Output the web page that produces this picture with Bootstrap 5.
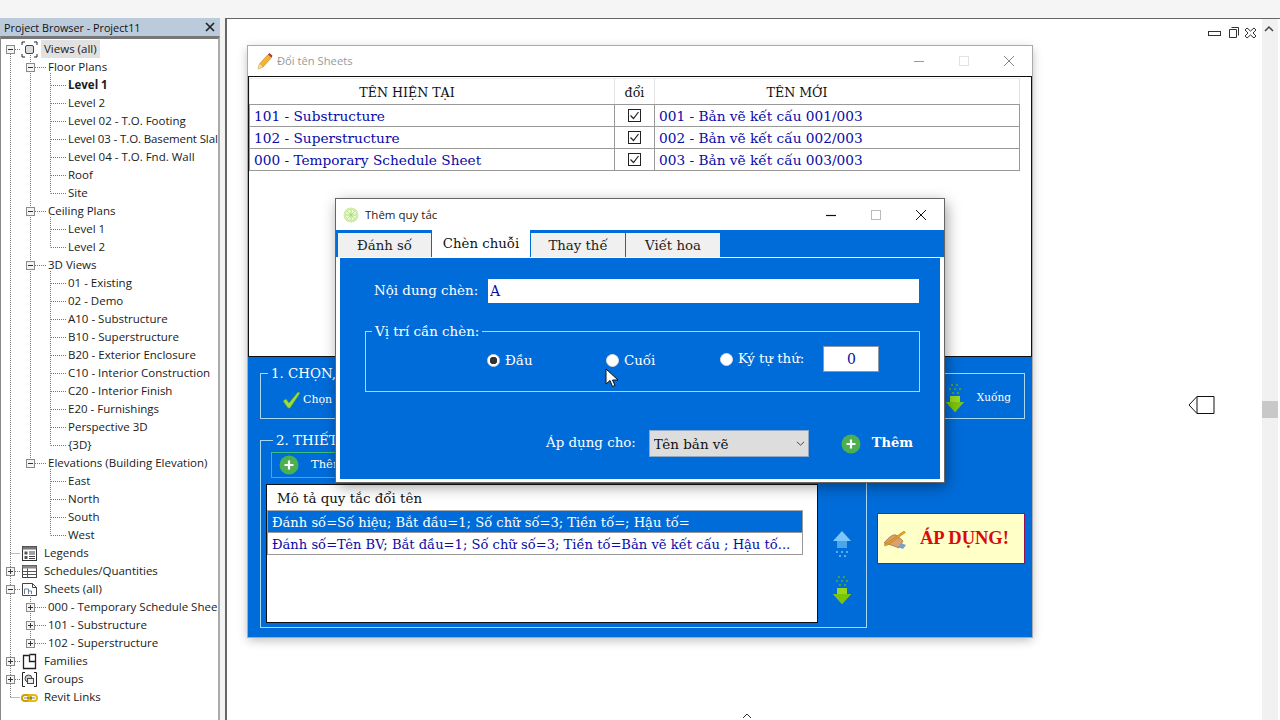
<!DOCTYPE html>
<html lang="vi">
<head>
<meta charset="utf-8">
<title>Project Browser</title>
<link href="https://cdn.jsdelivr.net/npm/bootstrap@5.3.0/dist/css/bootstrap.min.css" rel="stylesheet">
<style>
:root{--blue:#006cd9;--navy:#0a0aa8;--edge:#a9d8f5}
html,body{height:100%;overflow:hidden;background:#fff}
body{font-family:"Open Sans","Noto Sans",sans-serif;font-size:11.5px;color:#111}
.top-strip{height:18px;background:#f5f5f5}
.shell{height:702px}
.browser{width:220px;flex:none;position:relative;background:#fff;border-left:1px solid #888}
.browser-title{height:18px;margin-left:-1px;padding:0 5px 0 4px;background:#bccbdc;font-size:10.8px;line-height:19px}
.browser-tree{border-top:3px solid #777;border-right:2px solid #aaa;height:684px;padding-top:1px;overflow:hidden}
.tree-lines{position:absolute;left:-1px;top:-18px;pointer-events:none}
.node{height:18px;line-height:17px;white-space:nowrap;overflow:hidden;position:relative;color:#1a1a1a}
.lv0{padding-left:20px}.lv1{padding-left:47px}.lv2{padding-left:67px}
.lv0 span{margin-bottom:1px}
.lv0 span.sel-label{margin-bottom:0}
.tight-text{letter-spacing:-.12px}
.node svg{flex:none;margin-right:6px}
.sel-label{background:#e1e1e1;padding:0 3px;margin-left:-3px;line-height:18px}
.gutter{width:5px;flex:none;background:#f3f3f3}
.canvas-area{flex:1;position:relative;background:#fff;border-left:2px solid #666;border-top:1px solid #666}
.win-main{position:absolute;left:21px;top:27px;width:784px;height:591px;background:#fff;box-shadow:0 0 0 1px #aaa,0 3px 10px rgba(0,0,0,.28)}
.win-bar{height:30px;padding:0 16px 0 9px;color:#999}
.win-bar svg{flex:none}
.win-title{font-size:11.2px;margin-left:4px}
.sans-label{font-family:"Open Sans","Noto Sans",sans-serif;font-size:11.5px;margin-left:6px}
.win-ctrl{margin-left:auto;gap:31px}
.sheet-area{height:281px;border:1px solid #111;padding:1px 11px 0 0}
.serif{font-family:"DejaVu Serif","Liberation Serif",serif}
.tbl-names{width:770px;margin:0;table-layout:fixed;font-size:13.7px;--bs-table-bg:transparent}
.tbl-names th,.tbl-names td{border:1px solid #999;height:22px;line-height:20px;white-space:nowrap}
.tbl-names th{font-weight:400;text-align:center;height:26px;padding:0 0 1px;border-color:#eee #e3e3e3 #999;color:#111;font-size:12.6px}
.tbl-names th.head-left{padding-right:50px}
.tbl-names th.head-right{padding-right:80px}
.tbl-names td{color:var(--navy);padding:1px 0 0 4px}
.tbl-names td.mid{text-align:center;padding:0}
.tbl-names td.mid svg{margin-bottom:3px}
.tbl-names th:first-child{border-left-color:#eee}
.lower{height:280px;background:var(--blue);padding:7px 7px 0 12px;color:#fff}
.frame{border:1px solid var(--edge);margin:0;padding:0;min-width:0}
.frame>legend{float:none;width:auto;font-size:13.4px;line-height:16px;margin:0 0 0 7px;padding:2px 3px 0;color:#fff}
.frame-one{height:55px}
.frame-one .body-row{height:37px;padding-left:21px}
.tiny{font-size:11px;margin-left:2px}
.down-box{margin-left:auto;padding-right:13px;margin-top:-6px}
.down-box .tiny{font-size:10.5px}
.frame-two{width:607px;height:197px;padding:0 5px}
.frame-wrap{gap:10px;margin-top:12px}
.add-btn{width:300px;height:26px;margin-left:5px;padding-left:7px;border:1px solid #3fc07a;margin-top:3px}
.add-btn span{margin-left:12px;font-size:11.5px}
.rule-wrap{flex:none;width:552px}
.rule-box{width:552px;height:139px;margin-top:6px;background:#fff;border:1px solid #111;color:#111}
.rule-head{width:536px;height:26px;line-height:27px;padding-left:10px;font-size:13.4px;border-bottom:1px solid #aaa}
.rule-row{width:536px;height:22px;line-height:23px;font-size:13.1px;color:var(--navy);border:1px solid #999;border-top:0;white-space:nowrap;overflow:hidden;padding-left:4px}
.rule-on{background:var(--blue);color:#fff}
.arrow-col{flex:none;width:47px;gap:15px;padding-top:81px}
.apply-col{padding-top:82px}
.apply-btn{width:148px;height:51px;background:#ffffc8;border:1px solid #8c1450;color:#d90a0a;font-family:"Liberation Serif",serif;font-weight:700;font-size:18.5px;padding-left:5px;gap:11px}
.win-dialog{position:absolute;left:109px;top:180px;width:608px;height:283px;background:#fff;box-shadow:0 0 0 1px #666,2px 4px 14px rgba(0,0,0,.42);z-index:2}
.dlg-bar{height:31px;padding:0 16px 0 7px;color:#222}
.dlg-ctrl{margin-left:auto;gap:31px}
.dlg-tabs{height:27px;background:var(--blue);padding-left:2px;border:0;gap:1px;flex-wrap:nowrap}
.dlg-tabs .nav-link{height:24px;margin:3px 0 0;padding:0;border:0;border-radius:0;background:#f0f0f0;color:#222;font-size:13.3px;line-height:25px;text-align:center}
.dlg-tabs .nav-link.active{height:27px;margin-top:0;background:#fff;color:#111;line-height:27px}
.tab-a{width:93px}.tab-b{width:98px}.tab-c{width:94px}.tab-d{width:94px}
.dlg-panel{height:221px;margin:1px 4px 0;background:var(--blue);color:#fff;padding:21px 21px 0 25px;font-size:13.4px}
.in-row{padding-left:9px}
.in-row label{width:105px;margin-right:9px;white-space:nowrap}
.in-text{flex:1;height:24px;border:0;border-radius:0;padding:0 0 0 2px;font-size:14px;font-family:inherit;color:var(--navy);min-height:0;width:auto}
.frame-pos{height:70px;margin-top:19px;margin-right:-1px}
.frame-pos>legend{margin-left:6px}
.frame-pos .radios{padding:6px 0 0 121px}
.rad{width:13px;height:13px;border-radius:50%;background:#fff;flex:none;border:1px solid #ddd}
.rad-on{background:radial-gradient(circle,#333 0 3.5px,#fff 4px)}
.rad-txt{margin-left:5px}
.rad-one{width:119px;margin-top:4px}.rad-two{width:114px;margin-top:4px}
.num-in{width:56px;height:26px;margin-left:19px;border:1px solid #8a97a8;border-radius:0;padding:0;text-align:center;font:400 14px "DejaVu Serif",serif;color:var(--navy);min-height:0}
.apply-row{margin-top:38px;padding-left:181px}
.sel-apply{width:160px;height:27px;margin-left:13px;padding:0 0 0 4px;border:1px solid #8fa8c4;border-radius:0;background-color:#ddd;font:13.5px "DejaVu Serif",serif;color:#111;background-image:url("data:image/svg+xml,%3csvg xmlns='http://www.w3.org/2000/svg' viewBox='0 0 10 6'%3e%3cpath d='M1 1l4 4 4-4' fill='none' stroke='%23333'/%3e%3c/svg%3e");background-position:right 3px center;background-size:9px}
.them{font-weight:700;font-size:13px;margin-left:11px;margin-bottom:2px}
.apply-row svg{margin-left:32px}
.mdi-ctrl{position:absolute;left:981px;top:8px}
.vscroll{position:absolute;right:2px;top:0;width:16px;height:100%;background:#f1f1f1}
.vthumb{position:absolute;left:0;top:382px;width:16px;height:17px;background:#c8c8c8}
.vup{position:absolute;left:2px;top:6px}
.tag-mark{position:absolute;left:961px;top:377px}
.caret-mark{position:absolute;left:515px;top:694px}
.mouse{position:absolute;left:378px;top:349px;z-index:5}
</style>
</head>
<body>
<div class="top-strip"></div>
<div class="shell d-flex">
  <div class="browser">
    <div class="browser-title d-flex justify-content-between align-items-center">
      <span>Project Browser - Project11</span>
      <svg width="10" height="10" viewBox="0 0 10 10"><path d="M1 1l8 8M9 1l-8 8" stroke="#222" stroke-width="1.7"/></svg>
    </div>
    <div class="browser-tree">
      <div class="node lv0 d-flex align-items-center"><svg width="17" height="17" viewBox="0 0 17 17"><path d="M1 4V1h3M13 1h3v3M16 13v3h-3M4 16H1v-3" fill="none" stroke="#222"/><rect x="4.5" y="4.5" width="8" height="8" rx="1.5" fill="#ddd" stroke="#444"/></svg><span class="sel-label">Views (all)</span></div>
      <div class="node lv1">Floor Plans</div>
      <div class="node lv2 fw-bold">Level 1</div>
      <div class="node lv2">Level 2</div>
      <div class="node lv2">Level 02 - T.O. Footing</div>
      <div class="node lv2 tight-text">Level 03 - T.O. Basement Slal</div>
      <div class="node lv2">Level 04 - T.O. Fnd. Wall</div>
      <div class="node lv2">Roof</div>
      <div class="node lv2">Site</div>
      <div class="node lv1">Ceiling Plans</div>
      <div class="node lv2">Level 1</div>
      <div class="node lv2">Level 2</div>
      <div class="node lv1">3D Views</div>
      <div class="node lv2">01 - Existing</div>
      <div class="node lv2">02 - Demo</div>
      <div class="node lv2">A10 - Substructure</div>
      <div class="node lv2">B10 - Superstructure</div>
      <div class="node lv2">B20 - Exterior Enclosure</div>
      <div class="node lv2">C10 - Interior Construction</div>
      <div class="node lv2">C20 - Interior Finish</div>
      <div class="node lv2">E20 - Furnishings</div>
      <div class="node lv2">Perspective 3D</div>
      <div class="node lv2">{3D}</div>
      <div class="node lv1">Elevations (Building Elevation)</div>
      <div class="node lv2">East</div>
      <div class="node lv2">North</div>
      <div class="node lv2">South</div>
      <div class="node lv2">West</div>
      <div class="node lv0 d-flex align-items-center"><svg width="17" height="17" viewBox="0 0 17 17"><rect x="1.5" y="1.5" width="14" height="14" fill="#fff" stroke="#333"/><rect x="1.5" y="1.5" width="14" height="3" fill="#777"/><rect x="3.5" y="6.5" width="3" height="3" fill="#555"/><rect x="3.5" y="11" width="3" height="3" fill="#555"/><path d="M8 7h6M8 9h6M8 11.500h6M8 13.500h6" stroke="#444"/></svg><span>Legends</span></div>
      <div class="node lv0 d-flex align-items-center"><svg width="17" height="17" viewBox="0 0 17 17"><rect x="1.5" y="2.500" width="14" height="12" fill="#fff" stroke="#444"/><rect x="1.500" y="2.500" width="14" height="3" fill="#888"/><path d="M1.500 8.500h14M1.500 11.500h14M6.500 5.500v9" stroke="#555"/></svg><span>Schedules/Quantities</span></div>
      <div class="node lv0 d-flex align-items-center"><svg width="17" height="17" viewBox="0 0 17 17"><path d="M1.500 2.500h10l4 4v8h-14z" fill="#fff" stroke="#444"/><path d="M11.500 2.500v4h4" fill="none" stroke="#444"/><path d="M3.500 13V8h4v5M7.500 10h3v3" fill="none" stroke="#6a7f99"/></svg><span>Sheets (all)</span></div>
      <div class="node lv1">000 - Temporary Schedule Shee</div>
      <div class="node lv1">101 - Substructure</div>
      <div class="node lv1">102 - Superstructure</div>
      <div class="node lv0 d-flex align-items-center"><svg width="17" height="17" viewBox="0 0 17 17"><path d="M2.500 2.500h6v6h6v7h-12z M8.500 1.500h6v7" fill="#fff" stroke="#222" stroke-width="1.300"/></svg><span>Families</span></div>
      <div class="node lv0 d-flex align-items-center"><svg width="17" height="17" viewBox="0 0 17 17"><path d="M4 1.500H1.500v14H4M13 1.500h2.500v14H13" fill="none" stroke="#222"/><circle cx="7.500" cy="7.500" r="3.500" fill="#ccc" stroke="#444"/><rect x="6.500" y="7.500" width="6" height="5" fill="#eee" stroke="#444"/></svg><span>Groups</span></div>
      <div class="node lv0 d-flex align-items-center"><svg width="17" height="17" viewBox="0 0 17 17"><rect x="1" y="6" width="9" height="6" rx="3" fill="none" stroke="#c9a200" stroke-width="2"/><rect x="7" y="6" width="9" height="6" rx="3" fill="none" stroke="#e3bb10" stroke-width="2"/><path d="M3 9h11" stroke="#444" stroke-width=".7"/></svg><span>Revit Links</span></div>
    </div>
    <svg class="tree-lines" width="220" height="720" viewBox="0 0 220 720">
      <g fill="none" stroke="#777" stroke-dasharray="1 1">
        <path d="M10.500 50V697.500M15 49.500H20M10.500 697.500H20M10.500 553.500H20M15 571.500H20M15 589.500H20M15 661.500H20M15 679.500H20"/>
        <path d="M30.500 55V463.500M35 67.500H46M35 211.500H46M35 265.500H46M35 463.500H46"/>
        <path d="M50.500 73V193.500M50.500 217V247.500M50.500 271V445.500M50.500 469V535.500"/>
        <path d="M51 85.500H66M51 103.500H66M51 121.500H66M51 139.500H66M51 157.500H66M51 175.500H66M51 193.500H66M51 229.500H66M51 247.500H66M51 283.500H66M51 301.500H66M51 319.500H66M51 337.500H66M51 355.500H66M51 373.500H66M51 391.500H66M51 409.500H66M51 427.500H66M51 445.500H66M51 481.500H66M51 499.500H66M51 517.500H66M51 535.500H66"/>
        <path d="M30.500 595V643.500M35 607.500H46M35 625.500H46M35 643.500H46"/>
      </g>
      <g fill="#f4f4f4" stroke="#8a8a8a">
        <rect x="6.500" y="45.500" width="8" height="8"/><rect x="26.500" y="63.500" width="8" height="8"/><rect x="26.500" y="207.500" width="8" height="8"/><rect x="26.500" y="261.500" width="8" height="8"/><rect x="26.500" y="459.500" width="8" height="8"/><rect x="6.500" y="567.500" width="8" height="8"/><rect x="6.500" y="585.500" width="8" height="8"/><rect x="26.500" y="603.500" width="8" height="8"/><rect x="26.500" y="621.500" width="8" height="8"/><rect x="26.500" y="639.500" width="8" height="8"/><rect x="6.500" y="657.500" width="8" height="8"/><rect x="6.500" y="675.500" width="8" height="8"/>
      </g>
      <path stroke="#333" d="M8 49.500h5M28 67.500h5M28 211.500h5M28 265.500h5M28 463.500h5M8 589.500h5M8 571.500h5M10.500 569v5M28 607.500h5M30.500 605v5M28 625.500h5M30.500 623v5M28 643.500h5M30.500 641v5M8 661.500h5M10.500 659v5M8 679.500h5M10.500 677v5"/>
    </svg>
  </div>
  <div class="gutter"></div>
  <div class="canvas-area">
    <div class="win-main">
      <div class="win-bar d-flex align-items-center">
        <svg width="16" height="18" viewBox="0 0 16 18"><path d="M1 17l1.500-5L11 2.500l3.500 3L6 15z" fill="#f5b335" stroke="#c98a1c" stroke-width=".7"/><path d="M11 2.500l1.500-1.500 3 2.700-1 1.800z" fill="#a8323a"/><path d="M1 17l1.500-5 3.500 3z" fill="#f1d9ad"/></svg>
        <span class="win-title">Đổi tên Sheets</span>
        <div class="win-ctrl d-flex align-items-center">
          <svg width="14" height="12" viewBox="0 0 14 12"><path d="M2 6.500h10" stroke="#999"/></svg>
          <svg width="14" height="12" viewBox="0 0 14 12"><rect x="2.500" y="1.500" width="9" height="9" fill="none" stroke="#e2e2e2"/></svg>
          <svg width="14" height="12" viewBox="0 0 14 12"><path d="M2 1l10 10M12 1L2 11" stroke="#888"/></svg>
        </div>
      </div>
      <div class="sheet-area">
        <table class="table tbl-names serif">
          <colgroup><col style="width:365px"><col style="width:40px"><col style="width:365px"></colgroup>
          <thead><tr><th class="head-left">TÊN HIỆN TẠI</th><th>đổi</th><th class="head-right">TÊN MỚI</th></tr></thead>
          <tbody>
            <tr><td>101 - Substructure</td><td class="mid"><svg width="13" height="13" viewBox="0 0 13 13"><rect x=".5" y=".5" width="12" height="12" fill="#fff" stroke="#222"/><path d="M2.500 6.500l3 3 5-6.500" fill="none" stroke="#222" stroke-width="1.200"/></svg></td><td>001 - Bản vẽ kết cấu 001/003</td></tr>
            <tr><td>102 - Superstructure</td><td class="mid"><svg width="13" height="13" viewBox="0 0 13 13"><rect x=".5" y=".5" width="12" height="12" fill="#fff" stroke="#222"/><path d="M2.500 6.500l3 3 5-6.500" fill="none" stroke="#222" stroke-width="1.200"/></svg></td><td>002 - Bản vẽ kết cấu 002/003</td></tr>
            <tr><td>000 - Temporary Schedule Sheet</td><td class="mid"><svg width="13" height="13" viewBox="0 0 13 13"><rect x=".5" y=".5" width="12" height="12" fill="#fff" stroke="#222"/><path d="M2.500 6.500l3 3 5-6.500" fill="none" stroke="#222" stroke-width="1.200"/></svg></td><td>003 - Bản vẽ kết cấu 003/003</td></tr>
          </tbody>
        </table>
      </div>
      <div class="lower serif">
        <fieldset class="frame frame-one">
          <legend>1. CHỌN, SẮP XẾP</legend>
          <div class="body-row d-flex align-items-center">
            <svg width="19" height="19" viewBox="0 0 19 19"><path d="M1 10l3-2 3 4 9-11 2 1-10 15h-2z" fill="#9ae03a" stroke="#5a9e1c" stroke-width=".6"/></svg>
            <span class="tiny">Chọn tất cả</span>
            <div class="down-box d-flex align-items-center">
              <svg width="20" height="30" viewBox="0 0 20 30"><g fill="#3fa33f"><rect x="6" y="1" width="2" height="2"/><rect x="11" y="1" width="2" height="2"/><rect x="4" y="5" width="2" height="2"/><rect x="9" y="5" width="2" height="2"/><rect x="14" y="5" width="2" height="2"/><rect x="7" y="9" width="2" height="2"/><rect x="12" y="9" width="2" height="2"/></g><path d="M5 13h10v6h4L10 29 1 19h4z" fill="#97d81f"/><path d="M1 19h18l-9 10z" fill="#7cc40c"/></svg>
              <span class="tiny ms-2 ps-1">Xuống</span>
            </div>
          </div>
        </fieldset>
        <div class="frame-wrap d-flex">
          <fieldset class="frame frame-two">
            <legend>2. THIẾT LẬP</legend>
            <div class="d-flex">
              <div class="rule-wrap">
                <div class="add-btn d-flex align-items-center">
                  <svg width="20" height="20" viewBox="0 0 20 20"><circle cx="10" cy="10" r="9.500" fill="#4caf50"/><path d="M10 5.500v9M5.500 10h9" stroke="#fff" stroke-width="2.200"/></svg><span>Thêm quy tắc</span>
                </div>
                <div class="rule-box">
                  <div class="rule-head">Mô tả quy tắc đổi tên</div>
                  <div class="rule-row rule-on">Đánh số=Số hiệu; Bắt đầu=1; Số chữ số=3; Tiền tố=; Hậu tố=</div>
                  <div class="rule-row">Đánh số=Tên BV; Bắt đầu=1; Số chữ số=3; Tiền tố=Bản vẽ kết cấu ; Hậu tố...</div>
                </div>
              </div>
              <div class="arrow-col d-flex flex-column align-items-center">
                <svg width="20" height="30" viewBox="0 0 20 30"><path d="M10 1l9 10h-4v7H5v-7H1z" fill="#7ec6f7"/><path d="M5 11h10v7H5z" fill="#4aa6ec"/><g fill="#58aef0"><rect x="4" y="21" width="2" height="2"/><rect x="9" y="21" width="2" height="2"/><rect x="14" y="21" width="2" height="2"/><rect x="7" y="25" width="2" height="2"/><rect x="12" y="25" width="2" height="2"/></g></svg>
                <svg width="20" height="30" viewBox="0 0 20 30"><g fill="#3fa33f"><rect x="6" y="1" width="2" height="2"/><rect x="11" y="1" width="2" height="2"/><rect x="4" y="5" width="2" height="2"/><rect x="9" y="5" width="2" height="2"/><rect x="14" y="5" width="2" height="2"/><rect x="7" y="9" width="2" height="2"/><rect x="12" y="9" width="2" height="2"/></g><path d="M5 13h10v6h4L10 29 1 19h4z" fill="#97d81f"/><path d="M1 19h18l-9 10z" fill="#7cc40c"/></svg>
              </div>
            </div>
          </fieldset>
          <div class="apply-col">
            <div class="apply-btn d-flex align-items-center">
              <svg width="26" height="22" viewBox="0 0 26 22"><path d="M1 15c5-6 9-9 12-8l5 4 2 2-4 7-8-3z" fill="#d9a070" stroke="#8a5a30" stroke-width=".6"/><path d="M18 15l5 2-3 4-5-2z" fill="#7b9fc9"/><path d="M1 17L21 3l1.500 1.500L3 18z" fill="#f0a020" stroke="#9a5a10" stroke-width=".4"/></svg>
              <span>ÁP DỤNG!</span>
            </div>
          </div>
        </div>
      </div>
    </div>

    <div class="win-dialog serif">
      <div class="dlg-bar d-flex align-items-center">
        <svg width="16" height="16" viewBox="0 0 16 16"><circle cx="8" cy="8" r="7.500" fill="#cdeea4"/><circle cx="8" cy="8" r="5" fill="#f1f9e3"/><path d="M8 3v10M3 8h10M4.500 4.500l7 7M11.500 4.500l-7 7" stroke="#a8dd70"/></svg>
        <span class="win-title sans-label">Thêm quy tắc</span>
        <div class="dlg-ctrl d-flex align-items-center">
          <svg width="14" height="12" viewBox="0 0 14 12"><path d="M2 6.500h10" stroke="#111" stroke-width="1.200"/></svg>
          <svg width="14" height="12" viewBox="0 0 14 12"><rect x="2.500" y="1.500" width="9" height="9" fill="none" stroke="#bbb"/></svg>
          <svg width="14" height="12" viewBox="0 0 14 12"><path d="M2 1l10 10M12 1L2 11" stroke="#111"/></svg>
        </div>
      </div>
      <ul class="nav nav-tabs dlg-tabs">
        <li class="nav-item"><a class="nav-link tab-a" href="#">Đánh số</a></li>
        <li class="nav-item"><a class="nav-link active tab-b" href="#">Chèn chuỗi</a></li>
        <li class="nav-item"><a class="nav-link tab-c" href="#">Thay thế</a></li>
        <li class="nav-item"><a class="nav-link tab-d" href="#">Viết hoa</a></li>
      </ul>
      <div class="dlg-panel">
        <div class="in-row d-flex align-items-center">
          <label>Nội dung chèn:</label>
          <input class="form-control in-text" value="A">
        </div>
        <fieldset class="frame frame-pos">
          <legend>Vị trí cần chèn:</legend>
          <div class="radios d-flex align-items-center">
            <div class="rad-one d-flex align-items-center"><span class="rad rad-on"></span><span class="rad-txt">Đầu</span></div>
            <div class="rad-two d-flex align-items-center"><span class="rad"></span><span class="rad-txt">Cuối</span></div>
            <div class="d-flex align-items-center"><span class="rad"></span><span class="rad-txt">Ký tự thứ:</span><input class="form-control num-in" value="0"></div>
          </div>
        </fieldset>
        <div class="apply-row d-flex align-items-center">
          <span>Áp dụng cho:</span>
          <select class="form-select sel-apply"><option>Tên bản vẽ</option></select>
          <svg width="20" height="20" viewBox="0 0 20 20"><circle cx="10" cy="10" r="9.500" fill="#4caf50"/><path d="M10 5.500v9M5.500 10h9" stroke="#fff" stroke-width="2.200"/></svg>
          <span class="them">Thêm</span>
        </div>
      </div>
    </div>

    <svg class="mouse" width="14" height="20" viewBox="0 0 14 20"><path d="M1 1v15l4-3.500 2.500 6 2.500-1-2.500-5.500H13z" fill="#fff" stroke="#111"/></svg>
    <svg class="mdi-ctrl" width="50" height="12" viewBox="0 0 50 12"><rect x=".5" y="4.500" width="12" height="4" fill="#fff" stroke="#333"/><path d="M21.500 2.500h7v8h-7zM23.500.5h7v8" fill="#fff" stroke="#333"/><path d="M39 1l3.500 3L46 1l2 2-3 3 3 3-2 2-3.500-3L39 11l-2-2 3-3-3-3z" fill="#fff" stroke="#333"/></svg>
    <div class="vscroll">
      <svg class="vup" width="10" height="7" viewBox="0 0 10 7"><path d="M1 6l4-4 4 4" fill="none" stroke="#444" stroke-width="1.500"/></svg>
      <div class="vthumb"></div>
    </div>
    <svg class="tag-mark" width="28" height="18" viewBox="0 0 28 18"><path d="M9 .5h17v17H9L1 9zM9 .5v17" fill="#fff" stroke="#111"/></svg>
    <svg class="caret-mark" width="10" height="6" viewBox="0 0 10 6"><path d="M1 5l4-4 4 4" fill="none" stroke="#333"/></svg>
  </div>
</div>
</body>
</html>
